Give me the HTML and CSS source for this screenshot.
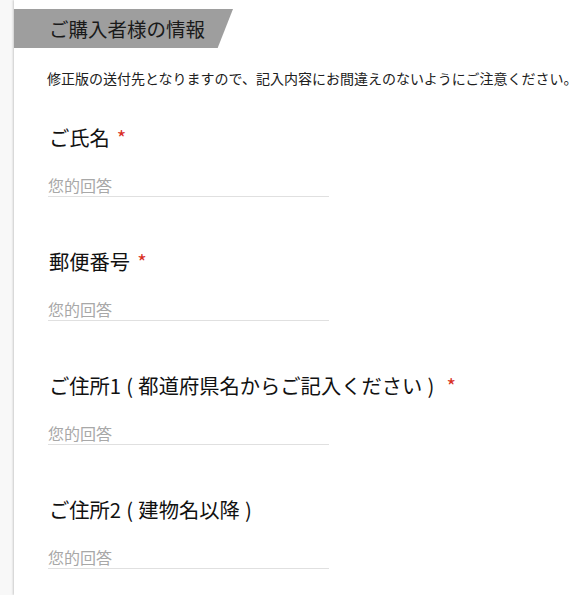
FILE: index.html
```html
<!DOCTYPE html>
<html lang="ja">
<head>
<meta charset="utf-8">
<link rel="stylesheet" href="styles.css">
</head>
<body>
<div class="page">
  <div class="card">
    <div class="banner"><span class="banner-text">ご購入者様の情報</span></div>
    <p class="desc">修正版の送付先となりますので、記入内容にお間違えのないようにご注意ください。</p>
    <div class="question">
      <div class="label">ご氏名<span class="req">*</span></div>
      <div class="answer">您的回答</div>
    </div>
    <div class="question">
      <div class="label">郵便番号<span class="req">*</span></div>
      <div class="answer">您的回答</div>
    </div>
    <div class="question">
      <div class="label">ご住所1<span class="paren">(</span>都道府県名からご記入ください<span class="paren">)</span><span class="req">*</span></div>
      <div class="answer">您的回答</div>
    </div>
    <div class="question">
      <div class="label">ご住所2<span class="paren">(</span>建物名以降<span class="paren">)</span></div>
      <div class="answer">您的回答</div>
    </div>
  </div>
</div>
</body>
</html>
```

FILE: styles.css
```css
html, body {
  margin: 0;
  padding: 0;
  background: #f8f8f8;
  font-family: "Noto Sans CJK JP", "Noto Sans", sans-serif;
}

.page {
  display: flex;
  min-height: 595px;
  padding-left: 14px;
}

.card {
  flex: 1;
  background: #ffffff;
  box-shadow: -1px 0 2px rgba(0, 0, 0, 0.18);
  overflow: hidden;
}

.banner {
  margin-top: 9px;
  width: 219px;
  height: 39px;
  background: #9e9e9e;
  clip-path: polygon(0 0, 100% 0, 93% 100%, 0 100%);
  display: flex;
  align-items: center;
}

.banner-text {
  padding-left: 35px;
  font-size: 19.5px;
  color: #1a1a1a;
  line-height: 39px;
}

.desc {
  margin: 20px 0 0 33px;
  font-size: 14px;
  line-height: 20px;
  color: #202020;
  white-space: nowrap;
}

.question {
  padding-left: 34px;
  margin-top: 35px;
}

.question + .question {
  margin-top: 50px;
}

.label {
  font-size: 20.3px;
  line-height: 28px;
  color: #111;
  padding-left: 1px;
  white-space: nowrap;
}

.paren {
  display: inline-block;
  width: 0.85em;
  text-align: center;
}

.req {
  color: #d93025;
  margin-left: 7px;
}

.answer {
  margin-top: 23px;
  width: 281px;
  font-size: 16px;
  line-height: 22px;
  color: #a8a8a8;
  border-bottom: 1px solid #e0e0e0;
}
```
